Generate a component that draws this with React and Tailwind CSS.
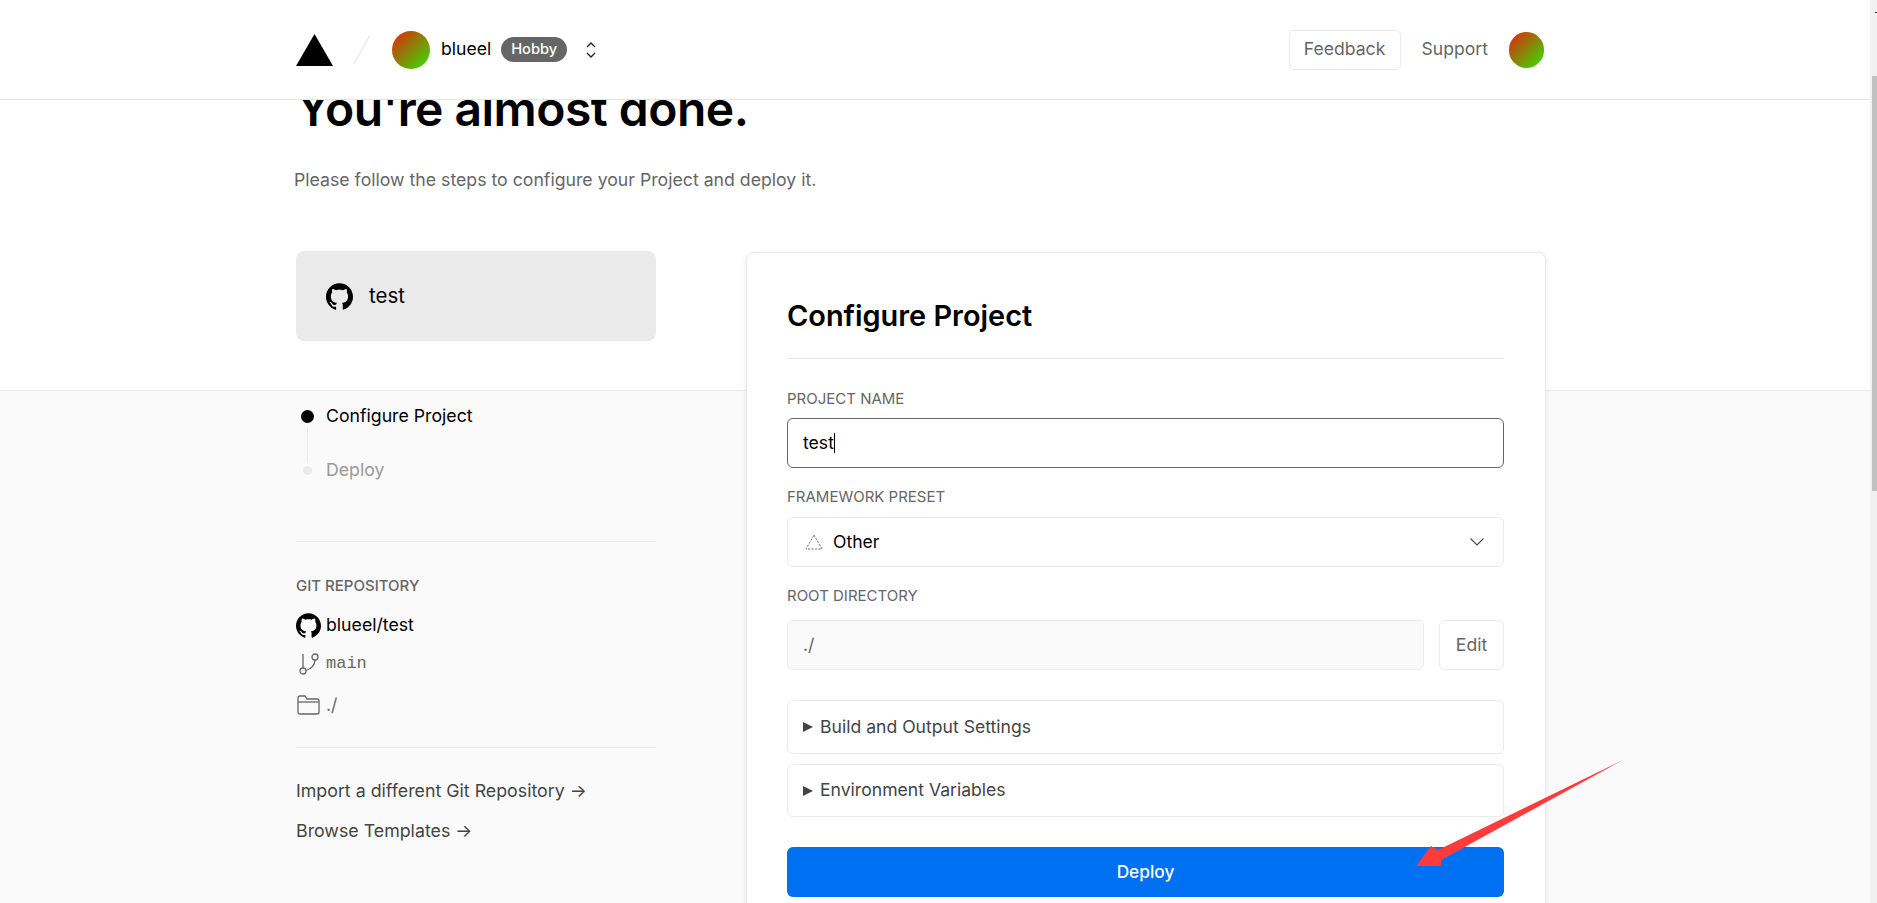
import { SiGithub } from "react-icons/si";

const Label = ({ children, className = "" }) => (
  <p className={`text-[15px] leading-[20px] text-[#666] ${className}`}>{children}</p>
);

const Avatar = ({ className = "" }) => (
  <div className={`bg-linear-to-br/srgb from-[#e8200f] to-[#2ce800] ${className}`} />
);

const Disclosure = ({ title, className = "" }) => (
  <div className={`flex items-center border border-[#eaeaea] rounded-[6px] pl-[14px] text-[17.6px] text-[#444] ${className}`}>
    <svg width="12" height="12" viewBox="0 0 12 12" className="mr-[6px]">
      <path d="M1 1 L11 6 L1 11 Z" fill="#444" />
    </svg>
    {title}
  </div>
);

const App = () => {
  return (
    <div className="flex h-screen overflow-hidden bg-white text-black font-['Inter',sans-serif]">
      <main className="relative flex-1 overflow-hidden">
        <header className="sticky top-0 z-10 h-[100px] bg-white border-b border-[#e4e4e4] pl-[296px] flex items-center">
          <div className="w-[1248px] flex items-center">
            <svg width="37" height="32" viewBox="0 0 37 32">
              <path d="M18.5 0 L37 32 L0 32 Z" fill="#000" />
            </svg>
            <svg width="18" height="31" viewBox="0 0 18 31" className="ml-[20px]">
              <path d="M17 1 L1 30" stroke="#eaeaea" strokeWidth="1.5" />
            </svg>
            <Avatar className="ml-[21px] w-[38px] h-[38px] rounded-full" />
            <span className="ml-[11px] text-[17.6px]">blueel</span>
            <span className="ml-[10px] h-[25px] w-[66px] justify-center rounded-full bg-[#666] text-white text-[14.7px] font-medium flex items-center">
              Hobby
            </span>
            <svg width="12" height="18" viewBox="0 0 12 18" fill="none" stroke="#222" strokeWidth="1.3" className="ml-[18px]">
              <path d="M2 6 L6 2 L10 6" />
              <path d="M2 12 L6 16 L10 12" />
            </svg>
            <div className="ml-auto flex items-center">
              <button className="h-[40px] w-[112px] border border-[#eaeaea] rounded-[5px] text-[#666] text-[17.6px]">
                Feedback
              </button>
              <span className="ml-[21px] text-[#666] text-[17.6px]">Support</span>
              <Avatar className="ml-[21px] w-[35px] h-[36px] rounded-full" />
            </div>
          </div>
        </header>

        <section className="flow-root h-[291px] bg-white border-b border-[#eaeaea] pl-[296px]">
          <h1 className="mt-[-23px] text-[48px] leading-[64px] font-semibold tracking-[-0.011em]">
            You're almost done.
          </h1>
          <p className="mt-[27px] text-[17.7px] leading-[24px] text-[#666] ml-[-2px]">
            Please follow the steps to configure your Project and deploy it.
          </p>
          <div className="mt-[59px] w-[360px] h-[90px] bg-[#eaeaea] rounded-[8px] flex items-center pl-[30px]">
            <SiGithub size={27} />
            <span className="ml-[16px] text-[20.5px]">test</span>
          </div>
        </section>

        <section className="bg-[#fafafa] pl-[296px] flex h-[600px]">
          <aside className="w-[360px] pt-[13px]">
            <div className="flex items-center h-[24px]">
              <span className="ml-[5px] w-[13px] h-[13px] rounded-full bg-black" />
              <span className="ml-[12px] text-[17.7px]">Configure Project</span>
            </div>
            <div className="ml-[11px] w-px h-[33px] bg-[#eaeaea]" />
            <div className="flex items-center h-[24px] mt-[-3px]">
              <span className="ml-[7px] w-[9px] h-[9px] rounded-full bg-[#eaeaea]" />
              <span className="ml-[14px] text-[17.7px] text-[#999]">Deploy</span>
            </div>

            <div className="mt-[59px] border-t border-[#eaeaea]" />

            <p className="mt-[34px] text-[15px] leading-[20px] font-medium text-[#666]">GIT REPOSITORY</p>
            <div className="mt-[16px] flex items-center h-[26px]">
              <SiGithub size={25} />
              <span className="ml-[5px] text-[17.7px]">blueel/test</span>
            </div>
            <div className="mt-[13px] flex items-center h-[26px]">
              <svg width="22" height="22" viewBox="0 0 22 22" fill="none" stroke="#666" strokeWidth="1.3" className="ml-[2px]">
                <path d="M5 1 L5 15" />
                <circle cx="5" cy="18" r="3" />
                <circle cx="17" cy="4" r="3" />
                <path d="M17 7 C17 12 13 16 8 17.5" />
              </svg>
              <span className="ml-[6px] text-[17px] text-[#666] font-['Liberation_Mono',monospace]">main</span>
            </div>
            <div className="mt-[16px] flex items-center h-[24px]">
              <svg width="23" height="20" viewBox="0 0 23 20" fill="none" stroke="#666" strokeWidth="1.3" className="ml-[1px]">
                <path d="M1 3 Q1 1 3 1 L8 1 L10 4 L20 4 Q22 4 22 6 L22 17 Q22 19 20 19 L3 19 Q1 19 1 17 Z" />
                <path d="M1 7 L22 7" />
              </svg>
              <span className="ml-[6px] text-[17.7px] text-[#666]">./</span>
            </div>

            <div className="mt-[30px] border-t border-[#eaeaea]" />

            <p className="mt-[31px] text-[17.8px] leading-[24px] text-[#444]">Import a different Git Repository →</p>
            <p className="mt-[16px] text-[17.8px] leading-[24px] text-[#444]">Browse Templates →</p>
          </aside>

          <div className="relative ml-[90px] mt-[-139px] w-[800px] h-[739px] bg-white border border-[#eaeaea] rounded-[8px] shadow-[0_2px_6px_rgba(0,0,0,0.08)] pl-[40px] pr-[41px]">
            <h2 className="mt-[43px] text-[28.9px] leading-[40px] font-semibold">Configure Project</h2>
            <div className="mt-[22px] border-t border-[#eaeaea]" />

            <Label className="mt-[30px]">PROJECT NAME</Label>
            <div className="mt-[9px] h-[50px] border border-[#666] rounded-[6px] flex items-center pl-[15px] text-[17.6px]">
              test
              <span className="w-px h-[20px] bg-black" />
            </div>

            <Label className="mt-[19px]">FRAMEWORK PRESET</Label>
            <div className="mt-[10px] h-[50px] border border-[#eaeaea] rounded-[6px] flex items-center pl-[17px] pr-[18px] text-[17.6px]">
              <svg width="18" height="16" viewBox="0 0 18 16" fill="none" stroke="#666" strokeWidth="1" strokeDasharray="2 1.5">
                <path d="M9 1 L17 15 L1 15 Z" />
              </svg>
              <span className="ml-[10px]">Other</span>
              <svg width="16" height="10" viewBox="0 0 16 10" fill="none" stroke="#444" strokeWidth="1.1" className="ml-auto">
                <path d="M1.5 1.5 L8 8 L14.5 1.5" />
              </svg>
            </div>

            <Label className="mt-[19px]">ROOT DIRECTORY</Label>
            <div className="mt-[14px] flex gap-[15px]">
              <div className="flex-1 h-[50px] bg-[#fafafa] border border-[#eaeaea] rounded-[6px] flex items-center pl-[15px] text-[17.6px] text-[#666]">
                ./
              </div>
              <button className="w-[65px] h-[50px] border border-[#eaeaea] rounded-[6px] text-[17.6px] text-[#666]">
                Edit
              </button>
            </div>

            <Disclosure title="Build and Output Settings" className="mt-[30px] h-[54px]" />
            <Disclosure title="Environment Variables" className="mt-[10px] h-[53px]" />

            <button className="mt-[30px] w-full h-[50px] bg-[#0070f3] rounded-[6px] text-white text-[17.3px] font-medium">
              Deploy
            </button>
          </div>
        </section>

        <svg
          width="220"
          height="120"
          viewBox="0 0 220 120"
          className="absolute left-[1410px] top-[755px] z-20 pointer-events-none"
        >
          <path d="M6 111 L21 91 L28 95 L213 5 L31 105 L31 111 Z" fill="#ff3b3b" />
        </svg>
      </main>

      <aside className="w-[7px] bg-[#f1f1f1]">
        <div className="mt-[12px] ml-[5px] w-[2px] h-px bg-[#333]" />
        <div className="mt-[63px] ml-[2px] h-[415px] bg-[#c1c1c1]" />
      </aside>
    </div>
  );
};

export default App;
